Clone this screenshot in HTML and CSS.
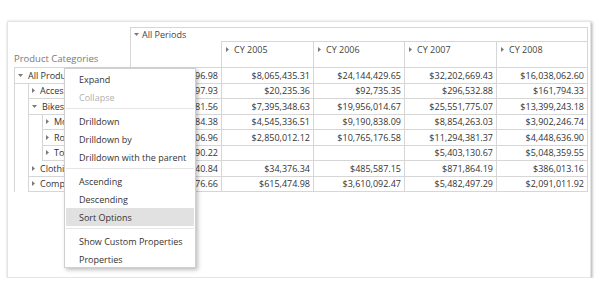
FILE: index.html
```html
<!DOCTYPE html>
<html>
<head>
<meta charset="utf-8">
<link rel="stylesheet" href="styles.css">
</head>
<body>
<div class="card">
  <div class="pivot">
    <div class="label">Product Categories</div>
    <div class="colarea"><svg class="tri-d" width="5" height="3" viewBox="0 0 5 3"><path d="M0 0H5L2.5 3Z"/></svg><span>All Periods</span></div>
    <div class="hdr-total"></div>
    <div class="hdr"><svg class="tri-r" width="3" height="5" viewBox="0 0 3 5"><path d="M0 0L3 2.5L0 5Z"/></svg><span>CY 2005</span></div>
    <div class="hdr"><svg class="tri-r" width="3" height="5" viewBox="0 0 3 5"><path d="M0 0L3 2.5L0 5Z"/></svg><span>CY 2006</span></div>
    <div class="hdr"><svg class="tri-r" width="3" height="5" viewBox="0 0 3 5"><path d="M0 0L3 2.5L0 5Z"/></svg><span>CY 2007</span></div>
    <div class="hdr"><svg class="tri-r" width="3" height="5" viewBox="0 0 3 5"><path d="M0 0L3 2.5L0 5Z"/></svg><span>CY 2008</span></div>

    <div class="rows">
      <div class="rh"><svg class="tri-d" width="5" height="3" viewBox="0 0 5 3"><path d="M0 0H5L2.5 3Z"/></svg><span>All Products</span></div>
      <div class="kids">
        <div class="rh"><svg class="tri-r" width="3" height="5" viewBox="0 0 3 5"><path d="M0 0L3 2.5L0 5Z"/></svg><span>Accessories</span></div>
        <div class="rh"><svg class="tri-d" width="5" height="3" viewBox="0 0 5 3"><path d="M0 0H5L2.5 3Z"/></svg><span>Bikes</span></div>
        <div class="kids">
          <div class="rh"><svg class="tri-r" width="3" height="5" viewBox="0 0 3 5"><path d="M0 0L3 2.5L0 5Z"/></svg><span>Mountain Bikes</span></div>
          <div class="rh"><svg class="tri-r" width="3" height="5" viewBox="0 0 3 5"><path d="M0 0L3 2.5L0 5Z"/></svg><span>Road Bikes</span></div>
          <div class="rh"><svg class="tri-r" width="3" height="5" viewBox="0 0 3 5"><path d="M0 0L3 2.5L0 5Z"/></svg><span>Touring Bikes</span></div>
        </div>
        <div class="rh"><svg class="tri-r" width="3" height="5" viewBox="0 0 3 5"><path d="M0 0L3 2.5L0 5Z"/></svg><span>Clothing</span></div>
        <div class="rh"><svg class="tri-r" width="3" height="5" viewBox="0 0 3 5"><path d="M0 0L3 2.5L0 5Z"/></svg><span>Components</span></div>
      </div>
    </div>

    <div class="v">$80,450,596.98</div><div class="v">$8,065,435.31</div><div class="v">$24,144,429.65</div><div class="v">$32,202,669.43</div><div class="v">$16,038,062.60</div>
    <div class="v">$571,297.93</div><div class="v">$20,235.36</div><div class="v">$92,735.35</div><div class="v">$296,532.88</div><div class="v">$161,794.33</div>
    <div class="v">$66,302,381.56</div><div class="v">$7,395,348.63</div><div class="v">$19,956,014.67</div><div class="v">$25,551,775.07</div><div class="v">$13,399,243.18</div>
    <div class="v">$26,492,684.38</div><div class="v">$4,545,336.51</div><div class="v">$9,190,838.09</div><div class="v">$8,854,263.03</div><div class="v">$3,902,246.74</div>
    <div class="v">$29,358,206.96</div><div class="v">$2,850,012.12</div><div class="v">$10,765,176.58</div><div class="v">$11,294,381.37</div><div class="v">$4,448,636.90</div>
    <div class="v">$10,451,490.22</div><div class="v"></div><div class="v"></div><div class="v">$5,403,130.67</div><div class="v">$5,048,359.55</div>
    <div class="v">$1,777,840.84</div><div class="v">$34,376.34</div><div class="v">$485,587.15</div><div class="v">$871,864.19</div><div class="v">$386,013.16</div>
    <div class="v">$11,799,076.66</div><div class="v">$615,474.98</div><div class="v">$3,610,092.47</div><div class="v">$5,482,497.29</div><div class="v">$2,091,011.92</div>
  </div>

  <div class="menu">
    <div class="mi">Expand</div>
    <div class="mi dis">Collapse</div>
    <div class="sep"></div>
    <div class="mi">Drilldown</div>
    <div class="mi">Drilldown by</div>
    <div class="mi">Drilldown with the parent</div>
    <div class="sep"></div>
    <div class="mi">Ascending</div>
    <div class="mi">Descending</div>
    <div class="mi hl">Sort Options</div>
    <div class="sep"></div>
    <div class="mi">Show Custom Properties</div>
    <div class="mi">Properties</div>
  </div>
</div>
</body>
</html>
```
FILE: styles.css
```css
body {
  margin: 0;
  background: #fff;
  font-family: "Open Sans", "Noto Sans", sans-serif;
  font-size: 9px;
  color: #333;
}

.card {
  position: relative;
  margin: 21px 0 0 7px;
  width: 584px;
  height: 257px;
  box-sizing: border-box;
  border: 1px solid #e4e4e4;
  box-shadow: 1px 1px 3px rgba(0, 0, 0, 0.35);
  padding: 5px 0 0 6px;
}

.pivot {
  display: grid;
  grid-template-columns: 117px 91px 92px 91px 92px 91px;
  grid-template-rows: 14px 27px repeat(8, 15.5px);
}

.pivot > div {
  box-sizing: border-box;
}

.tri-d, .tri-r {
  fill: #7a7a7a;
  flex: none;
}

.label {
  grid-column: 1;
  grid-row: 1 / 3;
  border-right: 1px solid #d6d6d6;
  border-bottom: 1px solid #d6d6d6;
  display: flex;
  align-items: flex-end;
  padding-bottom: 2px;
  color: #7d786f;
  font-size: 9.5px;
}

.colarea {
  grid-column: 2 / 7;
  grid-row: 1;
  border-top: 1px solid #d6d6d6;
  border-right: 1px solid #d6d6d6;
  display: flex;
  align-items: center;
  gap: 3px;
  padding-left: 3px;
  color: #444;
}

.hdr-total {
  grid-column: 2;
  grid-row: 2;
  border-right: 1px solid #d6d6d6;
  border-bottom: 1px solid #d6d6d6;
}

.hdr {
  border-top: 1px solid #d6d6d6;
  border-right: 1px solid #d6d6d6;
  border-bottom: 1px solid #d6d6d6;
  display: flex;
  align-items: center;
  align-self: stretch;
  gap: 5px;
  padding: 0 0 10px 4px;
  color: #444;
}

.rows {
  grid-column: 1;
  grid-row: 3 / 11;
  border-left: 1px solid #d6d6d6;
  border-right: 1px solid #d6d6d6;
  overflow: hidden;
}

.rh {
  height: 15.5px;
  box-sizing: border-box;
  border-bottom: 1px solid #d6d6d6;
  display: flex;
  align-items: center;
  gap: 5px;
  padding-left: 3px;
  white-space: nowrap;
  overflow: hidden;
}

.kids {
  margin-left: 13px;
  border-left: 1px solid #d6d6d6;
}

.v {
  border-right: 1px solid #d6d6d6;
  border-bottom: 1px solid #d6d6d6;
  display: flex;
  align-items: center;
  justify-content: flex-end;
  padding-right: 3px;
  white-space: nowrap;
}

.menu {
  position: absolute;
  left: 56px;
  top: 46px;
  width: 132px;
  height: 200px;
  box-sizing: border-box;
  background: #fff;
  border: 1px solid #cfcfcf;
  box-shadow: 2px 2px 4px rgba(0, 0, 0, 0.25);
  padding: 1px;
}

.mi {
  height: 18px;
  display: flex;
  align-items: center;
  padding-left: 13px;
  white-space: nowrap;
}

.mi.dis {
  color: #b0b0b0;
}

.mi.hl {
  background: #e1e1e1;
}

.sep {
  height: 1px;
  background: #e6e6e6;
  margin: 2px 0 3px;
}
```
